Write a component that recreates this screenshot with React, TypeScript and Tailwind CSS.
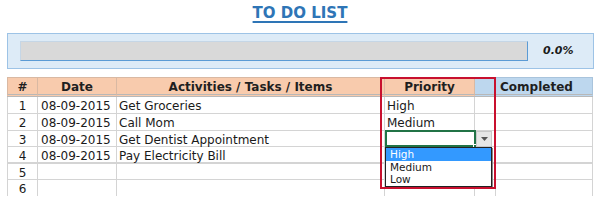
import React from "react";

const rows = [
  { n: "1", date: "08-09-2015", task: "Get Groceries", pri: "High", h: "h-[17px]", b: "border-b" },
  { n: "2", date: "08-09-2015", task: "Call Mom", pri: "Medium", h: "h-[17px]", b: "border-b" },
  { n: "3", date: "08-09-2015", task: "Get Dentist Appointment", pri: "", h: "h-[16px]", b: "border-b" },
  { n: "4", date: "08-09-2015", task: "Pay Electricity Bill", pri: "", h: "h-[17px]", b: "border-b-2" },
  { n: "5", date: "", task: "", pri: "", h: "h-[16px]", b: "border-b" },
  { n: "6", date: "", task: "", pri: "", h: "h-[17px]", b: "border-b" },
];

const hcell = "h-[20px] border-t border-r border-b-[3px] border-b-[#b8b8b8] border-double flex items-center justify-center pt-[2px]";

export default function App() {
  return (
    <div className="relative w-[600px] h-[208px] overflow-hidden bg-white font-['DejaVu_Sans',sans-serif] text-[#1a1a1a]">
      {/* Title */}
      <div className="flex justify-center pt-[4px] h-[33px]">
        <span className="text-[15px] leading-[18px] font-bold text-[#2e75b6] underline decoration-[2px] underline-offset-[3px]">
          TO DO LIST
        </span>
      </div>

      {/* Progress box */}
      <div className="ml-[7px] w-[587px] h-[36px] border border-[#9dc3e6] bg-[#ddebf7] flex items-center pl-[12px]">
        <div className="w-[508px] h-[20px] bg-[#d9d9d9] border border-[#c5d6e6] border-b-[#5b9bd5] border-r-[#5b9bd5]" />
        <span className="ml-[15px] text-[11px] font-bold italic text-[#1a1a1a]">0.0%</span>
      </div>

      {/* Table */}
      <div className="mt-[8px] ml-[7px] w-[587px] h-[119px] overflow-hidden">
        <div className="grid grid-cols-[31px_79px_268px_90px_21px_97px] text-[12px] leading-[14px] font-bold text-[#1f1f1f]">
          <div className={`${hcell} bg-[#f8cbad] border-l border-[#d9b9a3]`}>#</div>
          <div className={`${hcell} bg-[#f8cbad] border-[#d9b9a3]`}>Date</div>
          <div className={`${hcell} bg-[#f8cbad] border-[#d9b9a3]`}>Activities / Tasks / Items</div>
          <div className={`${hcell} bg-[#f8cbad] border-[#d9b9a3]`}>Priority</div>
          <div className={`${hcell} bg-[#bdd7ee] border-[#a9c4dc]`} />
          <div className={`${hcell} bg-[#bdd7ee] border-[#a9c4dc] !justify-start pl-[4px]`}>Completed</div>
        </div>
        {rows.map((r) => (
          <div key={r.n} className="grid grid-cols-[31px_79px_268px_90px_21px_97px] text-[12px] leading-[14px]">
            <div className={`${r.h} ${r.b} border-l border-r border-[#d4d4d4] flex justify-center pt-[2px]`}>{r.n}</div>
            <div className={`${r.h} ${r.b} border-r border-[#d4d4d4] pl-[3px] pt-[2px]`}>{r.date}</div>
            <div className={`${r.h} ${r.b} border-r border-[#d4d4d4] pl-[2px] pt-[2px]`}>{r.task}</div>
            <div className={`${r.h} ${r.b} border-r border-[#d4d4d4] pl-[2px] pt-[2px]`}>{r.pri}</div>
            <div className={`${r.h} ${r.b} border-r border-[#d4d4d4]`} />
            <div className={`${r.h} ${r.b} border-r border-[#d4d4d4]`} />
          </div>
        ))}
      </div>

      {/* Active cell (green selection) */}
      <div className="absolute left-[385px] top-[130px] w-[91px] h-[17px] border-2 border-[#217346] bg-white" />
      <div className="absolute left-[473px] top-[144px] w-[5px] h-[5px] bg-[#217346] border border-white" />
      {/* Dropdown arrow button */}
      <div className="absolute left-[476px] top-[131px] w-[16px] h-[16px] bg-[#e6e6e6] border border-[#c8c8c8] flex items-center justify-center">
        <svg width="7" height="4" viewBox="0 0 7 4"><path d="M0 0H7L3.5 4Z" fill="#555" /></svg>
      </div>
      {/* Dropdown list */}
      <div className="absolute left-[385px] top-[147px] w-[107px] h-[40px] bg-white border border-[#222] shadow-[1px_1px_0_#888] text-[10.5px] leading-[13px] flex flex-col">
        <div className="h-[13px] bg-[#3399ff] text-white pl-[4px]">High</div>
        <div className="h-[12px] pl-[4px] leading-[12px]">Medium</div>
        <div className="h-[12px] pl-[4px] leading-[12px]">Low</div>
      </div>

      {/* Red highlight box */}
      <div className="absolute left-[380px] top-[77px] w-[116px] h-[112px] border-2 border-[#c8102e]" />
    </div>
  );
}
